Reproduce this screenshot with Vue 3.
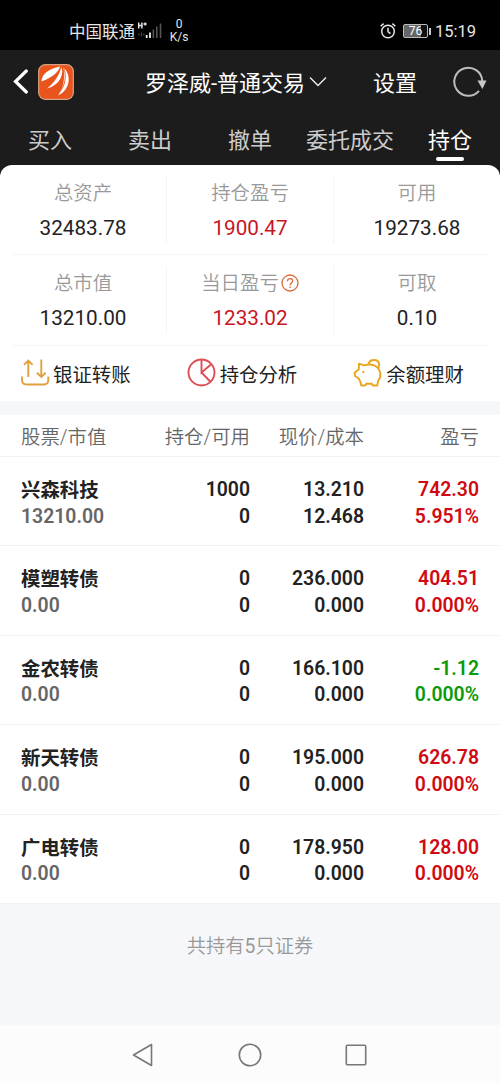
<script setup>
const tabs = ['买入', '卖出', '撤单', '委托成交', '持仓']
const summary = [
  [
    { label: '总资产', value: '32483.78' },
    { label: '持仓盈亏', value: '1900.47', red: true },
    { label: '可用', value: '19273.68' },
  ],
  [
    { label: '总市值', value: '13210.00' },
    { label: '当日盈亏', value: '1233.02', red: true, help: true },
    { label: '可取', value: '0.10' },
  ],
]
const holdings = [
  { name: '兴森科技', worth: '13210.00', held: '1000', usable: '0', price: '13.210', cost: '12.468', profit: '742.30', rate: '5.951%' },
  { name: '模塑转债', worth: '0.00', held: '0', usable: '0', price: '236.000', cost: '0.000', profit: '404.51', rate: '0.000%' },
  { name: '金农转债', worth: '0.00', held: '0', usable: '0', price: '166.100', cost: '0.000', profit: '-1.12', rate: '0.000%' },
  { name: '新天转债', worth: '0.00', held: '0', usable: '0', price: '195.000', cost: '0.000', profit: '626.78', rate: '0.000%' },
  { name: '广电转债', worth: '0.00', held: '0', usable: '0', price: '178.950', cost: '0.000', profit: '128.00', rate: '0.000%' },
]
</script>

<template>
  <div class="screen">
    <div class="status">
      <span class="carrier">中国联通</span>
      <svg class="signal" width="26" height="18" viewBox="0 0 26 18">
        <path d="M1.700 .5v6M4.900 .5v6M1.700 3.500h3.200M6.500 2h3.200M8.100 .4v3.200" stroke="#e6e6e6" stroke-width="1.500" fill="none" />
        <path d="M2 11.500v2M4.500 10.500v4M6.800 11.500v2" stroke="#444" stroke-width="1.200" />
        <path d="M9.700 13v3M13 10.500V16" stroke="#eee" stroke-width="1.800" />
        <path d="M16.400 7.500V16M19.800 4.500V16M23.500 1.500V16" stroke="#555" stroke-width="1.600" />
      </svg>
      <span class="speed"><span>0</span><span>K/s</span></span>
      <span class="grow"></span>
      <svg width="18" height="18" viewBox="0 0 18 18" fill="none" stroke="#e6e6e6" stroke-width="1.500">
        <circle cx="9" cy="9.500" r="6.300" />
        <path d="M9 5.700v4l2.400 2M1.700 4.300 4.600 1.600M16.300 4.300 13.400 1.600" />
      </svg>
      <span class="battery"><span>76</span></span>
      <span class="clock">15:19</span>
    </div>

    <div class="titlebar">
      <svg class="back" width="16" height="28" viewBox="0 0 16 28">
        <path d="M14.300 3 3.500 13.500 14.300 24" fill="none" stroke="#fff" stroke-width="3.200" stroke-linecap="round" />
      </svg>
      <svg class="logo" width="36" height="36" viewBox="0 0 36 36">
        <rect x=".7" y=".7" width="34.600" height="34.600" rx="6.500" fill="#e8541c" stroke="#d9a184" stroke-width="1.200" />
        <path d="M3.500 17.500C3.500 10 11 4.500 22 2.500 20.500 8.500 14 13.500 3.500 17.500Z" fill="#fff" />
        <path d="M9 24.500C16.500 18.500 21.500 11 23.200 3c3.200 7-1.500 18.500-14.200 21.500Z" fill="#fff" />
        <path d="M20 31.500C26.500 23 27 12 24.800 3 34 10 32.500 26 20 31.500Z" fill="#fff" />
        <path d="M24.200 2.500c2.500 8 1.300 16-4.300 23.500M25.500 3c3.500 9 1.500 19-3.500 24.500" fill="none" stroke="#e8541c" stroke-width=".9" />
      </svg>
      <span class="title">罗泽威-普通交易</span>
      <svg class="caret" width="18" height="12" viewBox="0 0 18 12">
        <path d="m1 1.500 8 8 8-8" fill="none" stroke="#eee" stroke-width="1.400" />
      </svg>
      <span class="settings">设置</span>
      <svg class="refresh" width="34" height="32" viewBox="0 0 34 32">
        <path d="M26 24.800A14 14 0 1 1 29.300 15" fill="none" stroke="#bdbdbd" stroke-width="2" />
        <path d="M24.500 14.500h9L29.400 23Z" fill="#c8c8c8" />
      </svg>
    </div>

    <div class="tabs">
      <span v-for="(t, i) in tabs" :key="t" class="tab" :class="{ active: i === 4 }">{{ t }}</span>
    </div>

    <div class="backdrop">
      <div class="card">
        <div v-for="(line, i) in summary" :key="i" class="line">
          <div v-for="c in line" :key="c.label" class="cell">
            <div class="label">
              {{ c.label }}
              <svg v-if="c.help" width="18" height="18" viewBox="0 0 18 18" fill="none" stroke="#d8693c" stroke-width="1.300">
                <circle cx="9" cy="9" r="8" />
                <path d="M6.400 7.200c0-3.500 5.300-3.300 5.300-.2 0 2-2.600 2-2.600 4.300M9.100 12.500v1.500" />
              </svg>
            </div>
            <div class="value" :class="{ red: c.red }">{{ c.value }}</div>
          </div>
        </div>
        <div class="actions">
          <div class="action">
            <svg width="30" height="30" viewBox="0 0 30 30" fill="none" stroke="#e0a040" stroke-width="1.900">
              <path d="M2 18.500V22q0 4.500 4.500 4.500h17.300q4.500 0 4.500-4.500v-3.500M8.300 19V3M4 6.800 8.300 2.500l4.300 4.300M21.300 1.500v17M17 14.700l4.300 4.200 4.300-4.200" />
            </svg>
            <span>银证转账</span>
          </div>
          <div class="action">
            <svg width="30" height="30" viewBox="0 0 30 30" fill="none" stroke="#df4d55" stroke-width="1.900">
              <circle cx="14.500" cy="14.500" r="13" />
              <path d="M14.500 1.500v13L24.300 6.300M14.500 14.500l8.700 9" />
            </svg>
            <span>持仓分析</span>
          </div>
          <div class="action">
            <svg width="30" height="30" viewBox="0 0 30 30" fill="none" stroke="#eba51c" stroke-width="1.900" stroke-linejoin="round">
              <path d="M6 5.700 11 7.400C14 6.500 18 6.300 20.500 7.200 27 9.500 29.500 17 25.200 22.700L24.200 27.500h-4.400l-1-1.700h-5.500l-1 1.700H8.300L7.300 23.500 5.500 20.200 2.300 18.300 1.500 14.700 5.700 11.500Z" />
              <path d="M15.500 6.500c.8-6 10.500-6.200 10.700 .2 0 1.500-.5 2.500-1.500 3.500" />
              <path d="M9.300 14h2" />
            </svg>
            <span>余额理财</span>
          </div>
        </div>
      </div>
    </div>

    <div class="row head">
      <span>股票/市值</span><span>持仓/可用</span><span>现价/成本</span><span>盈亏</span>
    </div>
    <div v-for="h in holdings" :key="h.name" class="row item">
      <div><p class="name">{{ h.name }}</p><p class="worth">{{ h.worth }}</p></div>
      <div><p>{{ h.held }}</p><p>{{ h.usable }}</p></div>
      <div><p>{{ h.price }}</p><p>{{ h.cost }}</p></div>
      <div :class="h.profit.startsWith('-') ? 'down' : 'up'"><p>{{ h.profit }}</p><p>{{ h.rate }}</p></div>
    </div>

    <div class="footer">共持有<span class="count">5</span>只证券</div>

    <div class="sysnav">
      <svg width="22" height="24" viewBox="0 0 22 24"><path d="M19.500 1.500v21L1.500 12Z" /></svg>
      <svg width="24" height="24" viewBox="0 0 24 24"><circle cx="12" cy="12" r="10.700" /></svg>
      <svg width="22" height="24" viewBox="0 0 22 24"><rect x="1.300" y="2.300" width="19.400" height="19.400" rx="1" /></svg>
    </div>
  </div>
</template>

<style>
body { margin: 0; }
</style>

<style scoped>
.screen {
  width: 500px;
  height: 1083px;
  overflow: hidden;
  display: flex;
  flex-direction: column;
  background: #f6f7fa;
  font-family: Roboto, "Noto Sans CJK SC", sans-serif;
  color: #222;
}
.screen > * { flex-shrink: 0; }
svg { flex-shrink: 0; }
.status {
  height: 50px;
  box-sizing: border-box;
  padding: 12px 24px 0 69px;
  background: #000;
  color: #e6e6e6;
  display: flex;
  align-items: center;
}
.carrier { font-size: 16.500px; }
.signal { margin-left: 2px; }
.speed {
  margin-left: 6px;
  width: 20px;
  display: flex;
  flex-direction: column;
  align-items: center;
  font-size: 12px;
  line-height: 13px;
}
.grow { flex: 1; }
.battery {
  position: relative;
  margin: 0 7px 0 6px;
  width: 23px;
  height: 12px;
  border: 1px solid #bbb;
  border-radius: 2px;
  background: linear-gradient(90deg, #666 76%, #111 76%);
  color: #fff;
  font-size: 12px;
  line-height: 13px;
  text-align: center;
}
.battery::after {
  content: "";
  position: absolute;
  right: -4px;
  top: 3px;
  width: 2px;
  height: 7px;
  background: #ccc;
}
.clock { font-size: 16.500px; }
.titlebar {
  height: 63px;
  background: #1c1c1c;
  color: #fff;
  display: flex;
  align-items: center;
  font-size: 22px;
}
.back { margin-left: 12px; }
.logo { margin-left: 10px; }
.title { margin-left: 71px; width: 161px; white-space: nowrap; }
.title, .settings { padding-bottom: 2px; }
.caret { margin-left: 3px; }
.settings { margin-left: 46px; }
.refresh { margin-left: 36px; }
.tabs {
  height: 52px;
  background: #1c1c1c;
  display: flex;
  color: #ccc;
  font-size: 22px;
  line-height: 55px;
}
.tab { width: 100px; text-align: center; position: relative; }
.active { color: #fff; }
.active::after {
  content: "";
  position: absolute;
  left: 36px;
  bottom: 4px;
  width: 28px;
  height: 4px;
  border-radius: 2px;
  background: #fff;
}
.backdrop { background: #1c1c1c; }
.card {
  height: 236px;
  border-radius: 12px 12px 0 0;
  background: #fff;
}
.line {
  height: 90px;
  margin: 0 13px;
  box-sizing: border-box;
  border-bottom: 1px solid #f4f4f4;
  display: flex;
  padding-top: 11px;
}
.line + .line { height: 91px; }
.cell {
  width: 153px;
  height: 68px;
  text-align: center;
  box-sizing: border-box;
}
.cell:first-child { padding-right: 13px; }
.cell:nth-child(2) { width: 168px; border: solid #f5f5f5; border-width: 0 1px; }
.cell:last-child { padding-left: 13px; }
.label {
  color: #999;
  font-size: 19.400px;
  font-weight: 350;
  line-height: 38px;
  height: 36px;
  display: flex;
  justify-content: center;
  align-items: center;
  gap: 2px;
}
.label svg { margin-top: -2px; }
.value { font-size: 20.700px; line-height: 32px; }
.red { color: #c9151e; }
.actions { display: flex; height: 55px; }
.action {
  width: 146.700px;
  padding-left: 20px;
  display: flex;
  align-items: center;
  gap: 3px;
  font-size: 19.400px;
}
.action svg { margin-top: -1px; }
.action span { padding-bottom: 1px; }
.row {
  display: grid;
  grid-template-columns: 120px 109px 114px 115px;
  padding: 0 21px;
  border-bottom: 1px solid #f3f3f5;
  background: #fff;
  text-align: right;
}
.row > :first-child { text-align: left; }
.head {
  margin-top: 14px;
  height: 41px;
  color: #666;
  font-size: 19.400px;
  font-weight: 350;
  line-height: 45px;
}
.item {
  height: 88.400px;
  font-size: 19.400px;
  font-weight: 600;
  line-height: 26.500px;
}
.item > div { padding-top: 20px; }
.item p { margin: 0; height: 26.500px; }
.item .name { line-height: 27px; }
.worth { color: #666; }
.up { color: #cf0a12; }
.down { color: #0a9a0a; }
.footer {
  flex: 1;
  text-align: center;
  color: #999;
  font-size: 19.300px;
  font-weight: 350;
  line-height: 85px;
}
.count { font-weight: 400; }
.sysnav {
  height: 58px;
  box-sizing: border-box;
  background: #fcfcfc;
  display: flex;
  align-items: center;
  padding: 2px 0 0 132px;
  gap: 83.500px;
}
.sysnav svg { fill: none; stroke: #777; stroke-width: 1.600; stroke-linejoin: round; }
</style>
